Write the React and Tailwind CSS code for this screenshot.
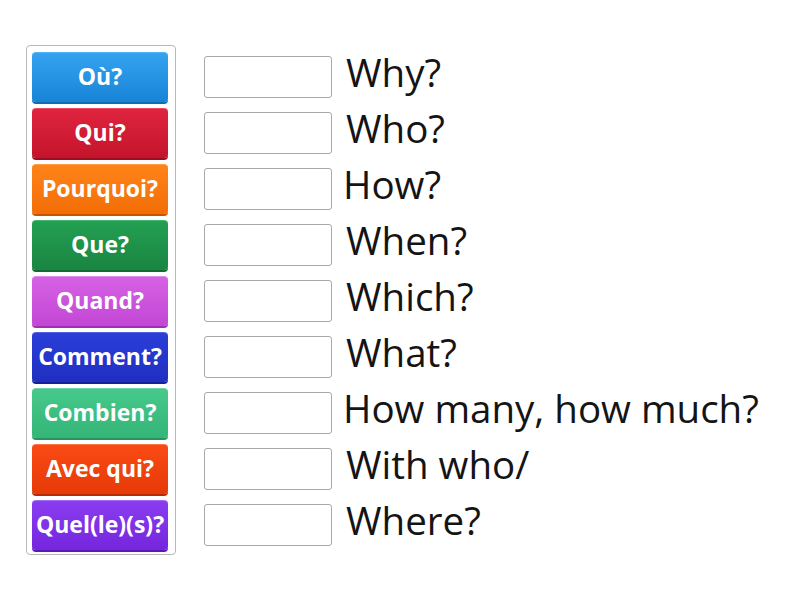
import React from "react";

const buttons = [
  { label: "Où?", cls: "from-[#34a3f0] to-[#1784d6] border-[#52b3f5] shadow-[0_2px_0_#0f6db5]" },
  { label: "Qui?", cls: "from-[#e0243e] to-[#c3142c] border-[#eb4a60] shadow-[0_2px_0_#9e0e22]" },
  { label: "Pourquoi?", cls: "from-[#ff8418] to-[#f26d06] border-[#ff9d45] shadow-[0_2px_0_#c95400]" },
  { label: "Que?", cls: "from-[#23a052] to-[#1a8542] border-[#45b56e] shadow-[0_2px_0_#136a33]" },
  { label: "Quand?", cls: "from-[#d661e4] to-[#c247d4] border-[#e28aed] shadow-[0_2px_0_#9d2fb0]" },
  { label: "Comment?", cls: "from-[#2a3ed8] to-[#1f2fc0] border-[#5062e0] shadow-[0_2px_0_#16229a]" },
  { label: "Combien?", cls: "from-[#46c98b] to-[#35b577] border-[#72d8a8] shadow-[0_2px_0_#279360]" },
  { label: "Avec qui?", cls: "from-[#fa4a14] to-[#e63a08] border-[#ff7245] shadow-[0_2px_0_#b82c04]" },
  { label: "Quel(le)(s)?", cls: "from-[#8a3cf0] to-[#7526de] border-[#a26af5] shadow-[0_2px_0_#5c18b5]" },
];

const answers = [
  { text: "Why?", shift: "ml-[14px]" },
  { text: "Who?", shift: "ml-[14px]" },
  { text: "How?", shift: "ml-[11px]" },
  { text: "When?", shift: "ml-[14px]" },
  { text: "Which?", shift: "ml-[14px]" },
  { text: "What?", shift: "ml-[14px]" },
  { text: "How many, how much?", shift: "ml-[11px]" },
  { text: "With who/", shift: "ml-[14px]" },
  { text: "Where?", shift: "ml-[14px]" },
];

export default function App() {
  return (
    <div className="w-[800px] h-[600px] bg-white font-['Open_Sans',sans-serif] flex pl-[26px] pt-[45px]">
      {/* buttons */}
      <div className="w-[150px] h-[510px] border border-[#b8b8b8] rounded-[4px] pl-[5px] pt-[6px] flex flex-col gap-[6px]">
        {buttons.map((b) => (
          <div
            key={b.label}
            className={`w-[136px] h-[50px] pb-[3px] rounded-[4px] bg-linear-to-b border-t ${b.cls} flex items-center justify-center text-white font-bold text-[23px] leading-none whitespace-nowrap`}
          >
            {b.label}
          </div>
        ))}
      </div>

      {/* answers */}
      <div className="ml-[28px] pt-[7px] flex flex-col gap-[6px]">
        {answers.map((a) => (
          <div key={a.text} className="h-[50px] flex items-center">
            <div className="w-[128px] h-[42px] border border-[#a8a8a8] rounded-[3px] bg-white" />
            <span className={`${a.shift} text-[38.5px] text-[#141414] leading-none whitespace-nowrap -mt-[9px]`}>{a.text}</span>
          </div>
        ))}
      </div>
    </div>
  );
}
